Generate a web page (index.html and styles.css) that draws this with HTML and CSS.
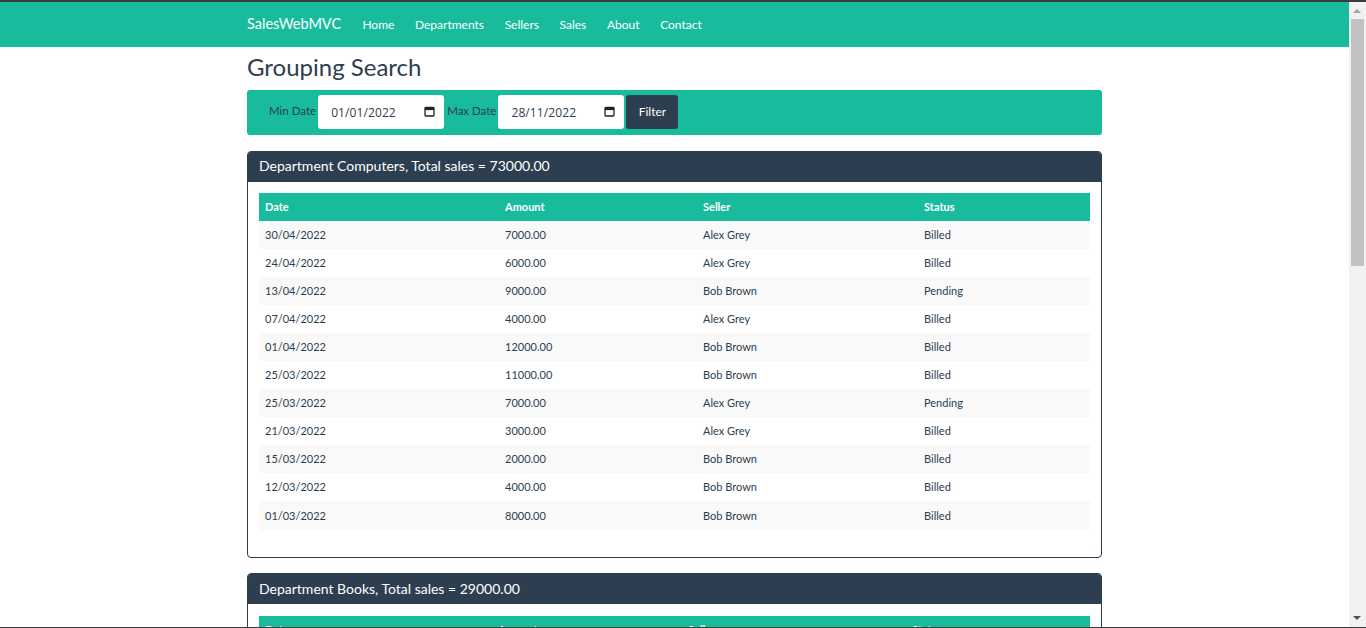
FILE: index.html
```html
<!DOCTYPE html>
<html lang="en">
<head>
<meta charset="utf-8">
<title>Grouping Search - SalesWebMVC</title>
<link rel="stylesheet" href="styles.css">
</head>
<body>
<div class="page">
<header class="navbar">
  <div class="container nav-inner">
    <a class="brand" href="#">SalesWebMVC</a>
    <nav class="nav-links">
      <a href="#">Home</a>
      <a href="#">Departments</a>
      <a href="#">Sellers</a>
      <a href="#">Sales</a>
      <a href="#">About</a>
      <a href="#">Contact</a>
    </nav>
  </div>
</header>
<main class="container">
  <h2 class="page-title">Grouping Search</h2>
  <form class="filter-bar">
    <label class="filter-label">Min Date</label>
    <div class="date-input"><span class="date-text">01/01/2022</span><svg class="cal" width="11" height="11" viewBox="0 0 11 11"><rect x="1" y="1.5" width="9" height="8.5" rx="0.8" fill="none" stroke="#222" stroke-width="1.3"/><rect x="1" y="1.5" width="9" height="2.6" fill="#222"/></svg></div>
    <label class="filter-label">Max Date</label>
    <div class="date-input"><span class="date-text">28/11/2022</span><svg class="cal" width="11" height="11" viewBox="0 0 11 11"><rect x="1" y="1.5" width="9" height="8.5" rx="0.8" fill="none" stroke="#222" stroke-width="1.3"/><rect x="1" y="1.5" width="9" height="2.6" fill="#222"/></svg></div>
    <button type="button" class="btn-filter">Filter</button>
  </form>

  <section class="panel">
    <div class="panel-heading">Department Computers, Total sales = 73000.00</div>
    <div class="panel-body">
      <table class="sales-table t1">
        <colgroup><col class="c1"><col class="c2"><col class="c3"><col class="c4"></colgroup>
        <thead><tr><th>Date</th><th>Amount</th><th>Seller</th><th>Status</th></tr></thead>
        <tbody>
          <tr><td>30/04/2022</td><td>7000.00</td><td>Alex Grey</td><td>Billed</td></tr>
          <tr><td>24/04/2022</td><td>6000.00</td><td>Alex Grey</td><td>Billed</td></tr>
          <tr><td>13/04/2022</td><td>9000.00</td><td>Bob Brown</td><td>Pending</td></tr>
          <tr><td>07/04/2022</td><td>4000.00</td><td>Alex Grey</td><td>Billed</td></tr>
          <tr><td>01/04/2022</td><td>12000.00</td><td>Bob Brown</td><td>Billed</td></tr>
          <tr><td>25/03/2022</td><td>11000.00</td><td>Bob Brown</td><td>Billed</td></tr>
          <tr><td>25/03/2022</td><td>7000.00</td><td>Alex Grey</td><td>Pending</td></tr>
          <tr><td>21/03/2022</td><td>3000.00</td><td>Alex Grey</td><td>Billed</td></tr>
          <tr><td>15/03/2022</td><td>2000.00</td><td>Bob Brown</td><td>Billed</td></tr>
          <tr><td>12/03/2022</td><td>4000.00</td><td>Bob Brown</td><td>Billed</td></tr>
          <tr class="last"><td>01/03/2022</td><td>8000.00</td><td>Bob Brown</td><td>Billed</td></tr>
        </tbody>
      </table>
    </div>
  </section>

  <section class="panel panel-second">
    <div class="panel-heading">Department Books, Total sales = 29000.00</div>
    <div class="panel-body">
      <table class="sales-table t2">
        <colgroup><col class="d1"><col class="d2"><col class="d3"><col class="d4"></colgroup>
        <thead><tr><th>Date</th><th>Amount</th><th>Seller</th><th>Status</th></tr></thead>
        <tbody>
          <tr><td>&nbsp;</td><td></td><td></td><td></td></tr>
          <tr><td>&nbsp;</td><td></td><td></td><td></td></tr>
        </tbody>
      </table>
    </div>
  </section>
</main>
</div>
<div class="scrollbar" aria-hidden="true">
  <div class="sb-arrow sb-up"></div>
  <div class="sb-thumb"></div>
  <div class="sb-arrow sb-down"></div>
</div>
<div class="frame-bottom" aria-hidden="true"></div>
</body>
</html>
```

FILE: styles.css
```css
html, body {
  margin: 0;
  padding: 0;
}
body {
  font-family: Lato, "Open Sans", "Liberation Sans", sans-serif;
  color: #2c3e50;
  background: #fff;
  border-top: 2px solid #3b3b3b;
  font-size: 11px;
}
.page {
  margin-right: 17px;
}
.container {
  width: 855px;
  margin: 0 auto;
}
.navbar {
  background: #18bc9c;
  height: 45px;
}
.nav-inner {
  display: flex;
  align-items: center;
  height: 45px;
}
.brand {
  color: #fff;
  text-decoration: none;
  font-size: 14.5px;
  margin-right: 11px;
  position: relative;
  top: -1px;
}
.nav-links {
  display: flex;
}
.nav-links a {
  color: #fff;
  text-decoration: none;
  font-size: 12px;
  padding: 0 10.3px;
}
.page-title {
  font-size: 24px;
  font-weight: 400;
  line-height: 30px;
  margin: 5px 0 8px;
  color: #2c3e50;
}
.filter-bar {
  background: #18bc9c;
  border-radius: 3px;
  height: 45px;
  box-sizing: border-box;
  padding: 5px 0 0 22px;
  display: flex;
  align-items: flex-start;
  margin: 0;
}
.filter-label {
  font-size: 11.5px;
  color: #2c3e50;
  line-height: 32px;
  margin-right: 2px;
}
.date-input {
  width: 126px;
  height: 34px;
  box-sizing: border-box;
  background: #fff;
  border-radius: 3px;
  display: flex;
  align-items: center;
  justify-content: space-between;
  padding: 1px 9px 0 13px;
  margin-right: 3px;
  font-family: "Open Sans", "Noto Sans", sans-serif;
  font-size: 12px;
  color: #2c3e50;
}
.date-text {
  letter-spacing: 0.1px;
}
.cal {
  display: block;
  margin-top: -2px;
}
.btn-filter {
  width: 52px;
  height: 34px;
  background: #2c3e50;
  color: #fff;
  border: 0;
  border-radius: 3px;
  font-family: Lato, sans-serif;
  font-size: 12px;
  padding: 0 0 1px;
  margin-left: -1px;
}
.panel {
  border: 1px solid #2c3e50;
  border-radius: 4px;
  margin-top: 16px;
  overflow: hidden;
}
.panel-second {
  margin-top: 15px;
}
.panel-heading {
  background: #2c3e50;
  color: #fff;
  font-size: 14px;
  height: 30px;
  line-height: 28px;
  padding: 0 11px;
}
.panel-second .panel-heading {
  line-height: 30px;
}
.panel-body {
  padding: 11px 11px 11px;
}
.panel-second .panel-body {
  padding-top: 12px;
}
.sales-table {
  width: 100%;
  border-collapse: collapse;
  margin-bottom: 16px;
  table-layout: fixed;
}
.c1 { width: 240px; }
.c2 { width: 198px; }
.c3 { width: 221px; }
.c4 { width: 172px; }
.d1 { width: 233px; }
.d2 { width: 190px; }
.d3 { width: 224px; }
.d4 { width: 184px; }
.sales-table th {
  background: #18bc9c;
  color: #fff;
  font-weight: 700;
  font-size: 11px;
  text-align: left;
  height: 28px;
  padding: 0 6px 2px;
  box-sizing: border-box;
}
.sales-table td {
  font-size: 11px;
  height: 28px;
  padding: 0 6px 2px;
  box-sizing: border-box;
  color: #2c3e50;
}
.sales-table tbody tr:nth-child(odd) td {
  background: #f9f9f9;
}
.sales-table tr.last td {
  height: 29px;
  padding-bottom: 1px;
}
.scrollbar {
  position: fixed;
  top: 2px;
  right: 0;
  bottom: 1px;
  width: 17px;
  background: #f1f1f1;
}
.sb-thumb {
  position: absolute;
  left: 2px;
  right: 2px;
  top: 17px;
  height: 247px;
  background: #c1c1c1;
}
.sb-arrow {
  position: absolute;
  left: 4px;
  width: 0;
  height: 0;
  border-left: 4px solid transparent;
  border-right: 4px solid transparent;
}
.sb-up {
  top: 7px;
  border-bottom: 4px solid #a3a3a3;
}
.sb-down {
  bottom: 7px;
  border-top: 4px solid #505050;
}
.frame-bottom {
  position: fixed;
  left: 0;
  right: 0;
  bottom: 0;
  height: 1px;
  background: #3b3b3b;
}
```
